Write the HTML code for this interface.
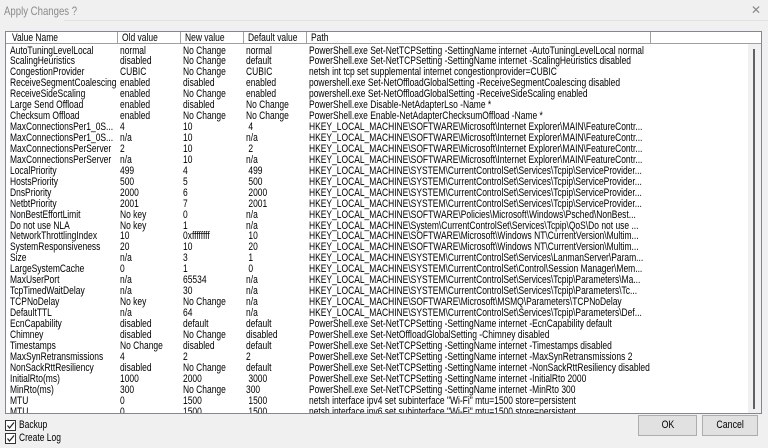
<!DOCTYPE html>
<html><head><meta charset="utf-8"><style>
*{margin:0;padding:0;box-sizing:border-box}
body{width:768px;height:448px;background:#f0f0f0;position:relative;overflow:hidden;font-family:"Liberation Sans",sans-serif;color:#000}
.t{position:absolute;white-space:nowrap;font-size:11px;transform:scaleX(0.77);transform-origin:left top;line-height:11px}
#title{position:absolute;left:4px;top:4px;font-size:12px;color:#8a8a8a;white-space:nowrap;transform:scaleX(0.8);transform-origin:left top}
#x{position:absolute;left:751px;top:3px;font-size:12px;color:#888}
#tline{position:absolute;left:64px;top:20px;width:704px;height:1px;background:#e2e2e2}
#list{position:absolute;left:5px;top:31px;width:757px;height:383px;background:#fff;border:1px solid #828790;overflow:hidden}
#hdr{position:absolute;left:0;top:0;width:755px;height:12px;background:#fff;border-bottom:1px solid #a0a0a0}
.hs{position:absolute;top:0;width:1px;height:12px;background:#a0a0a0}
.c{position:absolute;overflow:hidden;height:11px}
#sb{position:absolute;left:742px;top:12px;width:14px;height:371px;background:#f0f0f0}
#sbl{position:absolute;left:747px;top:17px;width:2px;height:360px;background:#606060}
.cb{position:absolute;left:5px;width:11px;height:11px;border:1px solid #333;background:#fff}
.cb svg{position:absolute;left:0;top:0}
.btn{position:absolute;top:415px;height:21px;background:#e1e1e1;border:1px solid #adadad;font-size:11px;text-align:center;line-height:19px}
</style></head><body>
<div id="title">Apply Changes ?</div>
<div id="x">✕</div>
<div id="tline"></div>
<div id="list">
<div id="hdr">
<div class="t" style="left:6px;top:1px">Value Name</div>
<div class="t" style="left:116px;top:1px">Old value</div>
<div class="t" style="left:179px;top:1px">New value</div>
<div class="t" style="left:242px;top:1px">Default value</div>
<div class="t" style="left:305px;top:1px">Path</div>
<div class="hs" style="left:111px"></div><div class="hs" style="left:174px"></div><div class="hs" style="left:237px"></div><div class="hs" style="left:300px"></div><div class="hs" style="left:644px"></div>
</div>
<div id="rows"></div>
<div id="sb"></div><div id="sbl"></div>
</div>
<div class="cb" style="top:420px"><svg width="9" height="9"><path d="M1.5 4.5 L3.5 7 L8 1.5" stroke="#222" fill="none" stroke-width="1.2"/></svg></div>
<div class="t" style="left:19px;top:420px">Backup</div>
<div class="cb" style="top:433px"><svg width="9" height="9"><path d="M1.5 4.5 L3.5 7 L8 1.5" stroke="#222" fill="none" stroke-width="1.2"/></svg></div>
<div class="t" style="left:19px;top:433px">Create Log</div>
<div class="btn" style="left:638px;width:59px"><span style="display:inline-block;transform:scaleX(0.8)">OK</span></div>
<div class="btn" style="left:702px;width:56px"><span style="display:inline-block;transform:scaleX(0.8)">Cancel</span></div>
<script>
var R=[
["AutoTuningLevelLocal","normal","No Change","normal","PowerShell.exe Set-NetTCPSetting -SettingName internet -AutoTuningLevelLocal normal"],
["ScalingHeuristics","disabled","No Change","default","PowerShell.exe Set-NetTCPSetting -SettingName internet -ScalingHeuristics disabled"],
["CongestionProvider","CUBIC","No Change","CUBIC","netsh int tcp set supplemental internet congestionprovider=CUBIC"],
["ReceiveSegmentCoalescing","enabled","disabled","enabled","powershell.exe Set-NetOffloadGlobalSetting -ReceiveSegmentCoalescing disabled"],
["ReceiveSideScaling","enabled","No Change","enabled","powershell.exe Set-NetOffloadGlobalSetting -ReceiveSideScaling enabled"],
["Large Send Offload","enabled","disabled","No Change","PowerShell.exe Disable-NetAdapterLso -Name *"],
["Checksum Offload","enabled","No Change","No Change","PowerShell.exe Enable-NetAdapterChecksumOffload -Name *"],
["MaxConnectionsPer1_0S...","4","10"," 4","HKEY_LOCAL_MACHINE\\SOFTWARE\\Microsoft\\Internet Explorer\\MAIN\\FeatureContr..."],
["MaxConnectionsPer1_0S...","n/a","10","n/a","HKEY_LOCAL_MACHINE\\SOFTWARE\\Microsoft\\Internet Explorer\\MAIN\\FeatureContr..."],
["MaxConnectionsPerServer","2","10"," 2","HKEY_LOCAL_MACHINE\\SOFTWARE\\Microsoft\\Internet Explorer\\MAIN\\FeatureContr..."],
["MaxConnectionsPerServer","n/a","10","n/a","HKEY_LOCAL_MACHINE\\SOFTWARE\\Microsoft\\Internet Explorer\\MAIN\\FeatureContr..."],
["LocalPriority","499","4"," 499","HKEY_LOCAL_MACHINE\\SYSTEM\\CurrentControlSet\\Services\\Tcpip\\ServiceProvider..."],
["HostsPriority","500","5"," 500","HKEY_LOCAL_MACHINE\\SYSTEM\\CurrentControlSet\\Services\\Tcpip\\ServiceProvider..."],
["DnsPriority","2000","6"," 2000","HKEY_LOCAL_MACHINE\\SYSTEM\\CurrentControlSet\\Services\\Tcpip\\ServiceProvider..."],
["NetbtPriority","2001","7"," 2001","HKEY_LOCAL_MACHINE\\SYSTEM\\CurrentControlSet\\Services\\Tcpip\\ServiceProvider..."],
["NonBestEffortLimit","No key","0","n/a","HKEY_LOCAL_MACHINE\\SOFTWARE\\Policies\\Microsoft\\Windows\\Psched\\NonBest..."],
["Do not use NLA","No key","1","n/a","HKEY_LOCAL_MACHINE\\System\\CurrentControlSet\\Services\\Tcpip\\QoS\\Do not use ..."],
["NetworkThrottlingIndex","10","0xffffffff"," 10","HKEY_LOCAL_MACHINE\\SOFTWARE\\Microsoft\\Windows NT\\CurrentVersion\\Multim..."],
["SystemResponsiveness","20","10"," 20","HKEY_LOCAL_MACHINE\\SOFTWARE\\Microsoft\\Windows NT\\CurrentVersion\\Multim..."],
["Size","n/a","3"," 1","HKEY_LOCAL_MACHINE\\SYSTEM\\CurrentControlSet\\Services\\LanmanServer\\Param..."],
["LargeSystemCache","0","1"," 0","HKEY_LOCAL_MACHINE\\SYSTEM\\CurrentControlSet\\Control\\Session Manager\\Mem..."],
["MaxUserPort","n/a","65534","n/a","HKEY_LOCAL_MACHINE\\SYSTEM\\CurrentControlSet\\Services\\Tcpip\\Parameters\\Ma..."],
["TcpTimedWaitDelay","n/a","30","n/a","HKEY_LOCAL_MACHINE\\SYSTEM\\CurrentControlSet\\Services\\Tcpip\\Parameters\\Tc..."],
["TCPNoDelay","No key","No Change","n/a","HKEY_LOCAL_MACHINE\\SOFTWARE\\Microsoft\\MSMQ\\Parameters\\TCPNoDelay"],
["DefaultTTL","n/a","64","n/a","HKEY_LOCAL_MACHINE\\SYSTEM\\CurrentControlSet\\Services\\Tcpip\\Parameters\\Def..."],
["EcnCapability","disabled","default","default","PowerShell.exe Set-NetTCPSetting -SettingName internet -EcnCapability default"],
["Chimney","disabled","No Change","disabled","PowerShell.exe Set-NetOffloadGlobalSetting -Chimney disabled"],
["Timestamps","No Change","disabled","default","PowerShell.exe Set-NetTCPSetting -SettingName internet -Timestamps disabled"],
["MaxSynRetransmissions","4","2","2","PowerShell.exe Set-NetTCPSetting -SettingName internet -MaxSynRetransmissions 2"],
["NonSackRttResiliency","disabled","No Change","default","PowerShell.exe Set-NetTCPSetting -SettingName internet -NonSackRttResiliency disabled"],
["InitialRto(ms)","1000","2000"," 3000","PowerShell.exe Set-NetTCPSetting -SettingName internet -InitialRto 2000"],
["MinRto(ms)","300","No Change","300","PowerShell.exe Set-NetTCPSetting -SettingName internet -MinRto 300"],
["MTU","0","1500"," 1500","netsh interface ipv4 set subinterface \"Wi-Fi\" mtu=1500 store=persistent"],
["MTU","0","1500"," 1500","netsh interface ipv6 set subinterface \"Wi-Fi\" mtu=1500 store=persistent"]];
var X=[[4,108],[114,60],[177,60],[240,60],[303,440]],h="";
R.forEach(function(r,i){var y=(13.5+i*10.94).toFixed(2);
r.forEach(function(v,j){h+='<div class="c" style="left:'+X[j][0]+'px;top:'+y+'px;width:'+X[j][1]+'px"><div class="t" style="left:0;top:0;white-space:pre">'+v.replace(/&/g,'&amp;').replace(/</g,'&lt;')+'</div></div>';});});
document.getElementById('rows').innerHTML=h;
</script>
</body></html>
